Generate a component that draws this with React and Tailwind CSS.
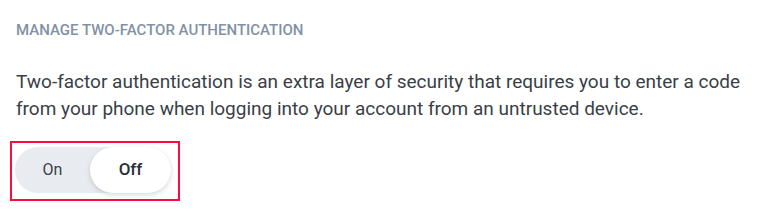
export default function App() {
  return (
    <div className="w-[768px] h-[217px] bg-white px-4 pt-[20px] font-['Roboto',sans-serif]">
      <h3 className="text-[15px] leading-5 font-medium uppercase text-[#8391a5]">
        Manage two-factor authentication
      </h3>
      <p className="mt-[28px] text-[19px] leading-[27px] text-[#3a3f47]">
        Two-factor authentication is an extra layer of security that requires you to enter a code
        from your phone when logging into your account from an untrusted device.
      </p>
      <div className="mt-[19px] -ml-[6px] w-[170px] h-[60px] border-2 border-[#ff0a3c] pl-[3px] pt-[4px]">
        <div className="flex w-[156px] h-[46px] rounded-full bg-[#e8ebef]">
          <button className="w-[75px] text-[16px] text-[#3a3f47]">On</button>
          <button className="w-[81px] rounded-full bg-white text-[17px] font-medium text-[#2b2f36] shadow-[0_2px_5px_rgba(0,0,0,0.15)]">
            Off
          </button>
        </div>
      </div>
    </div>
  )
}
